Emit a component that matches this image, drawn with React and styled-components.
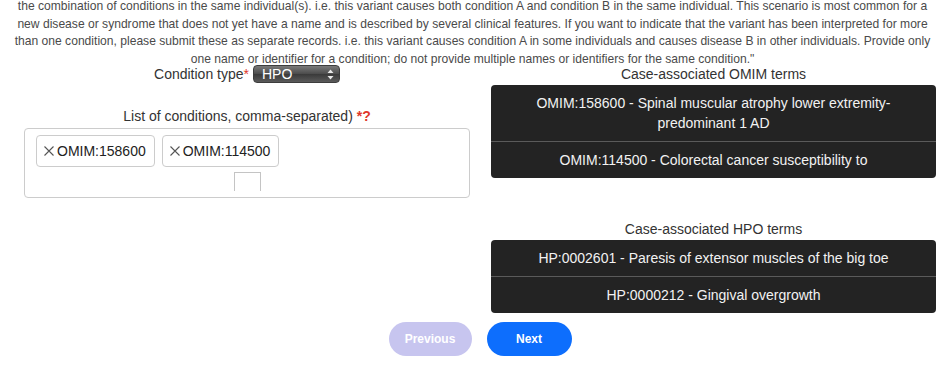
import React from 'react';
import styled, { createGlobalStyle } from 'styled-components';

const GlobalStyle = createGlobalStyle`
  html, body {
    margin: 0;
    padding: 0;
    background: #fff;
    overflow: hidden;
  }
  body {
    font-family: "Liberation Sans", Arial, Helvetica, sans-serif;
    color: #333;
  }
`

const Page = styled.div`
  padding: 0 9px 0 24px;
`

const Intro = styled.p`
  margin: -2px 0 0 -24px;
  width: 945px;
  font-size: 12.1px;
  line-height: 17.5px;
  color: #4a4a4a;
  text-align: center;
  white-space: nowrap;
`

const Columns = styled.div`
  display: grid;
  grid-template-columns: 446px 445px;
  column-gap: 21px;
`

const LeftCol = styled.div`
  display: flex;
  flex-direction: column;
  align-items: center;
`

const TypeRow = styled.div`
  display: flex;
  align-items: center;
  height: 18px;
  margin-top: -3px;
  font-size: 14px;
`

const Req = styled.span`
  color: #e0382c;
  font-weight: ${p => (p.bold ? 700 : 400)};
`

const SelectWrap = styled.div`
  position: relative;
  margin-left: 4px;
  width: 87px;
  height: 18px;
`

const Select = styled.select`
  appearance: none;
  -webkit-appearance: none;
  width: 100%;
  height: 100%;
  margin: 0;
  padding: 0 0 0 8px;
  border: 1px solid #3d3d3d;
  border-radius: 4px;
  background: linear-gradient(#7a7a7a, #4b4b4b 50%, #3a3a3a 51%, #5a5a5a);
  color: #fff;
  font-family: "Liberation Sans", Arial, sans-serif;
  font-size: 14px;
  line-height: 16px;
  outline: none;
`

const Arrows = styled.svg`
  position: absolute;
  right: 6px;
  top: 4px;
  pointer-events: none;
`

const ListLabel = styled.div`
  margin-top: 24px;
  font-size: 14px;
  line-height: 18px;
`

const TagBox = styled.div`
  align-self: stretch;
  margin-top: 3px;
  border: 1px solid #ccc;
  border-radius: 4px;
  padding: 6px 11px 6px;
  display: flex;
  flex-direction: column;
`

const Tags = styled.div`
  display: flex;
  gap: 7px;
`

const Tag = styled.div`
  display: flex;
  align-items: center;
  height: 30px;
  padding: 0 8px 0 6px;
  border: 1px solid #ccc;
  border-radius: 4px;
  font-size: 14px;
  color: #222;
`

const TagInput = styled.input`
  align-self: center;
  width: 27px;
  height: 19px;
  margin: 5px 0 0;
  padding: 0;
  box-sizing: border-box;
  border: 1px solid #c4c4c4;
  border-bottom: none;
  background: transparent;
  outline: none;
`

const RightCol = styled.div`
  display: flex;
  flex-direction: column;
`

const TermsTitle = styled.div`
  margin-top: ${p => p.gap}px;
  margin-bottom: 1px;
  text-align: center;
  font-size: 14px;
  line-height: 20px;
`

const TermList = styled.div`
  background: #232323;
  border-radius: 4px;
  overflow: hidden;
`

const Term = styled.div`
  padding: 8px 14px;
  text-align: center;
  color: #f2f2f2;
  font-size: 14px;
  line-height: 20px;
  & + & {
    border-top: 1px solid #5a5a5a;
  }
`

const Nav = styled.div`
  display: flex;
  justify-content: center;
  gap: 15px;
  margin-top: 9px;
`

const NavButton = styled.button`
  width: ${p => p.w}px;
  height: 34px;
  border: none;
  border-radius: 17px;
  background: ${p => (p.disabled ? '#c7c5ef' : '#0d6efd')};
  color: #fff;
  font-family: "Liberation Sans", Arial, sans-serif;
  font-weight: 700;
  font-size: 12px;
`

const CloseIcon = () => (
  <svg width="12" height="12" viewBox="0 0 12 12" style={{ marginRight: 2 }}>
    <path d="M1.5 1.5 L10.5 10.5 M10.5 1.5 L1.5 10.5" stroke="#555" strokeWidth="1.1" fill="none" />
  </svg>
);

const omim = [
  'OMIM:158600 - Spinal muscular atrophy lower extremity-predominant 1 AD',
  'OMIM:114500 - Colorectal cancer susceptibility to',
];

const hpo = [
  'HP:0002601 - Paresis of extensor muscles of the big toe',
  'HP:0000212 - Gingival overgrowth',
];

const App = () => {
  return (
    <>
      <GlobalStyle />
      <Page>
        <Intro>
          the combination of conditions in the same individual(s). i.e. this variant causes both condition A and condition B in the same individual. This scenario is most common for a<br />
          new disease or syndrome that does not yet have a name and is described by several clinical features. If you want to indicate that the variant has been interpreted for more<br />
          than one condition, please submit these as separate records. i.e. this variant causes condition A in some individuals and causes disease B in other individuals. Provide only<br />
          one name or identifier for a condition; do not provide multiple names or identifiers for the same condition."
        </Intro>
        <Columns>
          <LeftCol>
            <TypeRow>
              Condition type<Req>*</Req>
              <SelectWrap>
                <Select defaultValue="HPO">
                  <option>HPO</option>
                  <option>OMIM</option>
                </Select>
                <Arrows width="7" height="11" viewBox="0 0 7 11">
                  <path d="M3.5 0.5 L6.5 4 L0.5 4 Z M3.5 10.5 L6.5 7 L0.5 7 Z" fill="#e8e8e8" />
                </Arrows>
              </SelectWrap>
            </TypeRow>
            <ListLabel>
              List of conditions, comma-separated) <Req bold>*?</Req>
            </ListLabel>
            <TagBox>
              <Tags>
                <Tag><CloseIcon />OMIM:158600</Tag>
                <Tag><CloseIcon />OMIM:114500</Tag>
              </Tags>
              <TagInput />
            </TagBox>
          </LeftCol>
          <RightCol>
            <TermsTitle gap={-4}>Case-associated OMIM terms</TermsTitle>
            <TermList>
              {omim.map(t => <Term key={t}>{t}</Term>)}
            </TermList>
            <TermsTitle gap={41}>Case-associated HPO terms</TermsTitle>
            <TermList>
              {hpo.map(t => <Term key={t}>{t}</Term>)}
            </TermList>
          </RightCol>
        </Columns>
        <Nav>
          <NavButton w={83} disabled>Previous</NavButton>
          <NavButton w={85}>Next</NavButton>
        </Nav>
      </Page>
    </>
  );
};

export default App;
